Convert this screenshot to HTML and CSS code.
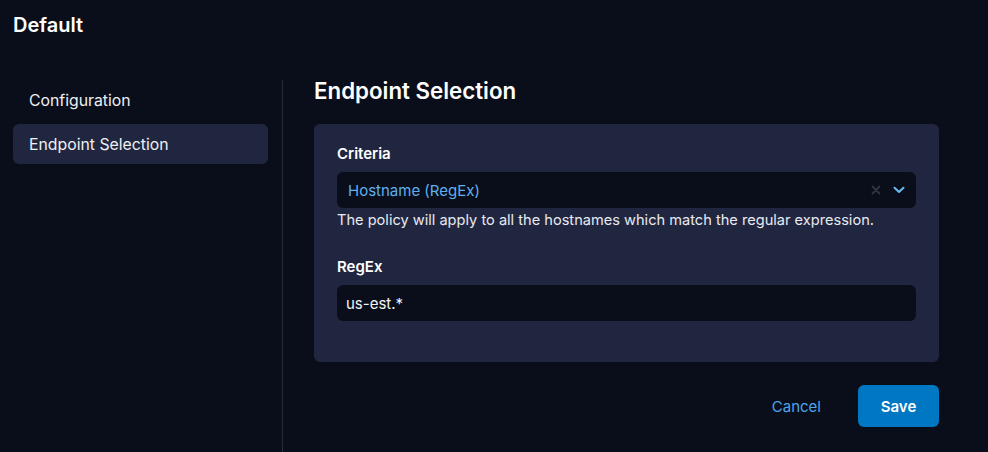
FILE: index.html
```html
<!DOCTYPE html>
<html>
<head>
<meta charset="utf-8">
<link rel="stylesheet" href="styles.css">
</head>
<body>
<div class="page">
  <h1 class="title">Default</h1>
  <div class="layout">
    <nav class="sidenav">
      <div class="nav-item">Configuration</div>
      <div class="nav-item active">Endpoint Selection</div>
    </nav>
    <div class="divider"></div>
    <main class="main">
      <h2 class="heading">Endpoint Selection</h2>
      <section class="card">
        <div class="field">
          <label class="label">Criteria</label>
          <div class="select">
            <span class="select-value">Hostname (RegEx)</span>
            <span class="select-icons">
              <svg class="clear" width="10" height="10" viewBox="0 0 10 10"><path d="M1.5 1.5 L8.5 8.5 M8.5 1.5 L1.5 8.5" stroke="#2f3442" stroke-width="1.8" stroke-linecap="round"/></svg>
              <svg class="chev" width="12" height="8" viewBox="0 0 12 8"><path d="M1.5 1.8 L6 6 L10.5 1.8" fill="none" stroke="#6cb8f2" stroke-width="2" stroke-linecap="round" stroke-linejoin="round"/></svg>
            </span>
          </div>
          <p class="help">The policy will apply to all the hostnames which match the regular expression.</p>
        </div>
        <div class="field field-regex">
          <label class="label">RegEx</label>
          <div class="input">us-est.*</div>
        </div>
      </section>
      <div class="actions">
        <button class="btn-cancel">Cancel</button>
        <button class="btn-save">Save</button>
      </div>
    </main>
  </div>
</div>
</body>
</html>
```
FILE: styles.css
```css
* { box-sizing: border-box; }
html, body {
  margin: 0;
  padding: 0;
  background: #0a0e1a;
  color: #f2f3f5;
  font-family: Inter, "Noto Sans", sans-serif;
  height: 100%;
  overflow: hidden;
}
.page {
  padding: 0 13px;
  height: 452px;
  display: flex;
  flex-direction: column;
}
.title {
  margin: 0;
  padding-top: 12px;
  font-size: 20px;
  line-height: 26px;
  font-weight: 600;
  color: #ffffff;
}
.layout {
  display: flex;
  flex: 1;
  margin-top: 42px;
}
.sidenav {
  width: 255px;
  display: flex;
  flex-direction: column;
  gap: 4px;
}
.nav-item {
  height: 40px;
  padding-left: 16px;
  display: flex;
  align-items: center;
  font-size: 15.8px;
  font-weight: 400;
  color: #eef0f4;
  border-radius: 6px;
}
.nav-item.active {
  background: #212640;
}
.divider {
  width: 1px;
  background: #272b37;
  margin-left: 14px;
}
.main {
  margin-left: 31px;
  width: 625px;
  display: flex;
  flex-direction: column;
}
.heading {
  margin: 0;
  font-size: 22.3px;
  line-height: 22px;
  font-weight: 600;
  color: #ffffff;
  padding-top: 0;
  height: 44px;
}
.card {
  background: #212640;
  border-radius: 6px;
  padding: 20px 23px 41px;
  display: flex;
  flex-direction: column;
}
.field { display: flex; flex-direction: column; }
.field-regex { margin-top: 27px; }
.label {
  font-size: 15px;
  font-weight: 600;
  line-height: 20px;
  color: #ffffff;
  margin-bottom: 8px;
}
.select, .input {
  height: 36px;
  background: #0a0e1a;
  border-radius: 6px;
  display: flex;
  align-items: center;
  font-size: 15px;
}
.select { padding: 0 11px; justify-content: space-between; }
.select-value { color: #5fb0f0; }
.select-icons { display: flex; align-items: center; gap: 12px; }
.input { padding: 0 9px; color: #f2f3f5; }
.help {
  margin: 2px 0 0;
  font-size: 14.6px;
  line-height: 20px;
  color: #e8eaf0;
}
.actions {
  display: flex;
  justify-content: flex-end;
  align-items: center;
  margin-top: 23px;
  gap: 37px;
}
.btn-cancel {
  background: none;
  border: none;
  color: #4aa6ec;
  font-family: inherit;
  font-size: 15px;
  padding: 0;
}
.btn-save {
  width: 81px;
  height: 42px;
  border: none;
  border-radius: 6px;
  background: #0077c2;
  color: #ffffff;
  font-family: inherit;
  font-size: 15px;
  font-weight: 600;
}
```
